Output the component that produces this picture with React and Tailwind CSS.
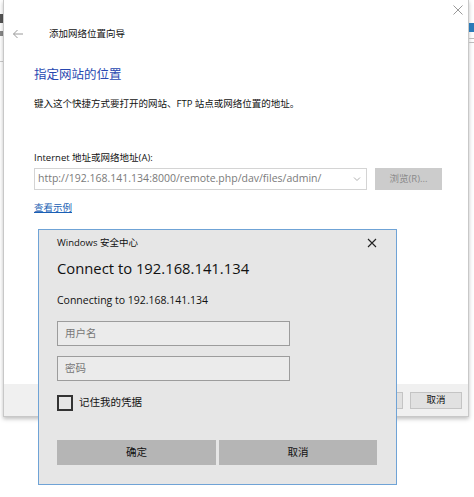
import React from "react";

const CJK = { fontFamily: '"Open Sans", "Noto Sans CJK SC", sans-serif' };

export default function App() {
  return (
    <div className="w-[474px] h-[497px] bg-white overflow-hidden relative" style={CJK}>
      <div className="flex">
        {/* left desktop strip */}
        <div className="w-[3px] h-[420px] flex flex-col bg-white">
          <div className="h-[14px]" />
          <div className="h-[9px] bg-[#555]" />
          <div className="h-[8px]" />
          <div className="h-[5px] bg-[#888]" />
          <div className="h-[25px]" />
          <div className="h-[1px] bg-[#ccc]" />
        </div>
        {/* wizard window */}
        <div className="w-[466px] h-[417px] bg-white border-x border-b border-[#c8c8c8] shadow-[0_2px_4px_rgba(0,0,0,0.25)] flex flex-col">
          <div className="h-[22px] flex justify-end items-center pr-[4px]">
            <svg width="12" height="12" viewBox="0 0 12 12" className="mt-[-2px]">
              <path d="M1.5 1.5 L10.5 10.5 M10.5 1.5 L1.5 10.5" stroke="#9a9a9a" strokeWidth="1" />
            </svg>
          </div>
          <div className="h-[23px] flex items-center pt-[1px]">
            <svg width="12" height="10" viewBox="0 0 12 10" className="ml-[8px]">
              <path d="M11 5 H1.5 M5.5 1 L1.5 5 L5.5 9" stroke="#9a9a9a" strokeWidth="1" fill="none" />
            </svg>
            <span className="ml-[25px] text-[9.5px] leading-[14px] text-[#111]">添加网络位置向导</span>
          </div>
          <div className="pl-[30px]">
            <div className="mt-[22px] text-[12.5px] leading-[16px] text-[#2747b0]">指定网站的位置</div>
            <div className="mt-[14px] text-[9.5px] leading-[14px] text-[#111]">键入这个快捷方式要打开的网站、FTP 站点或网络位置的地址。</div>
            <div className="mt-[40px] text-[9.5px] leading-[14px] text-[#111]">Internet 地址或网络地址(A):</div>
            <div className="mt-[3px] flex gap-[8px]">
              <div className="w-[333px] h-[22px] border border-[#d4d4d4] bg-white flex items-center pl-[3px] pr-[5px]">
                <span className="flex-1 text-[10.5px] text-[#7a7a7a] whitespace-nowrap">http://192.168.141.134:8000/remote.php/dav/files/admin/</span>
                <svg width="8" height="6" viewBox="0 0 8 6">
                  <path d="M1 1.5 L4 4.5 L7 1.5" stroke="#b0b0b0" strokeWidth="1" fill="none" />
                </svg>
              </div>
              <div className="w-[67px] h-[22px] bg-[#cccccc] flex items-center justify-center text-[9.5px] text-[#8a8a8a]">浏览(R)...</div>
            </div>
            <div className="mt-[11px] text-[9.5px] leading-[14px] text-[#1a5fb4] underline">查看示例</div>
          </div>
          <div className="flex-1" />
          <div className="h-[32px] bg-[#f0f0f0] flex items-center justify-end gap-[7px] pr-[6px]">
            <div className="w-[52px] h-[17px] bg-[#e1e1e1] border border-[#c4c4c4]" />
            <div className="w-[52px] h-[17px] bg-[#e1e1e1] border border-[#c4c4c4] flex items-center justify-center text-[9.5px] text-[#111]">取消</div>
          </div>
        </div>
        {/* right desktop strip */}
        <div className="w-[5px] h-[420px] flex flex-col">
          <div className="h-[23px]" />
          <div className="h-[9px] bg-[#2a7ab8]" />
          <div className="h-[6px]" />
          <div className="h-[1px] bg-[#bbb]" />
          <div className="h-[3px]" />
          <div className="h-[1px] bg-[#bbb]" />
        </div>
      </div>

      {/* Windows security dialog overlay */}
      <div className="absolute left-[38px] top-[229px] w-[359px] h-[256px] bg-[#e6e6e6] border border-[#6fa3d6] pl-[18px] pr-[18px]">
        <div className="mt-[6px] h-[14px] flex items-center justify-between">
          <span className="text-[9.5px] text-[#111]">Windows 安全中心</span>
          <svg width="10" height="10" viewBox="0 0 10 10" className="mr-[1px]">
            <path d="M1 1 L9 9 M9 1 L1 9" stroke="#222" strokeWidth="1.1" />
          </svg>
        </div>
        <div className="mt-[8px] h-[20px] text-[14.8px] leading-[20px] text-[#111] whitespace-nowrap">Connect to 192.168.141.134</div>
        <div className="mt-[15px] h-[14px] text-[10.5px] leading-[14px] text-[#111] whitespace-nowrap">Connecting to 192.168.141.134</div>
        <div className="mt-[14px] w-[233px] h-[25px] border border-[#9c9c9c] bg-[#ebebeb] flex items-center pl-[7px] text-[10.5px] text-[#777]">用户名</div>
        <div className="mt-[10px] w-[233px] h-[25px] border border-[#9c9c9c] bg-[#ebebeb] flex items-center pl-[7px] text-[10.5px] text-[#777]">密码</div>
        <div className="mt-[14px] flex items-center gap-[6px]">
          <div className="w-[16px] h-[16px] border-2 border-[#333]" />
          <span className="text-[10.5px] text-[#111]">记住我的凭据</span>
        </div>
        <div className="mt-[29px] flex gap-[3px]">
          <div className="w-[159px] h-[25px] bg-[#b5b5b5] flex items-center justify-center text-[10.5px] text-[#111]">确定</div>
          <div className="w-[158px] h-[25px] bg-[#b5b5b5] flex items-center justify-center text-[10.5px] text-[#111]">取消</div>
        </div>
      </div>
    </div>
  );
}
